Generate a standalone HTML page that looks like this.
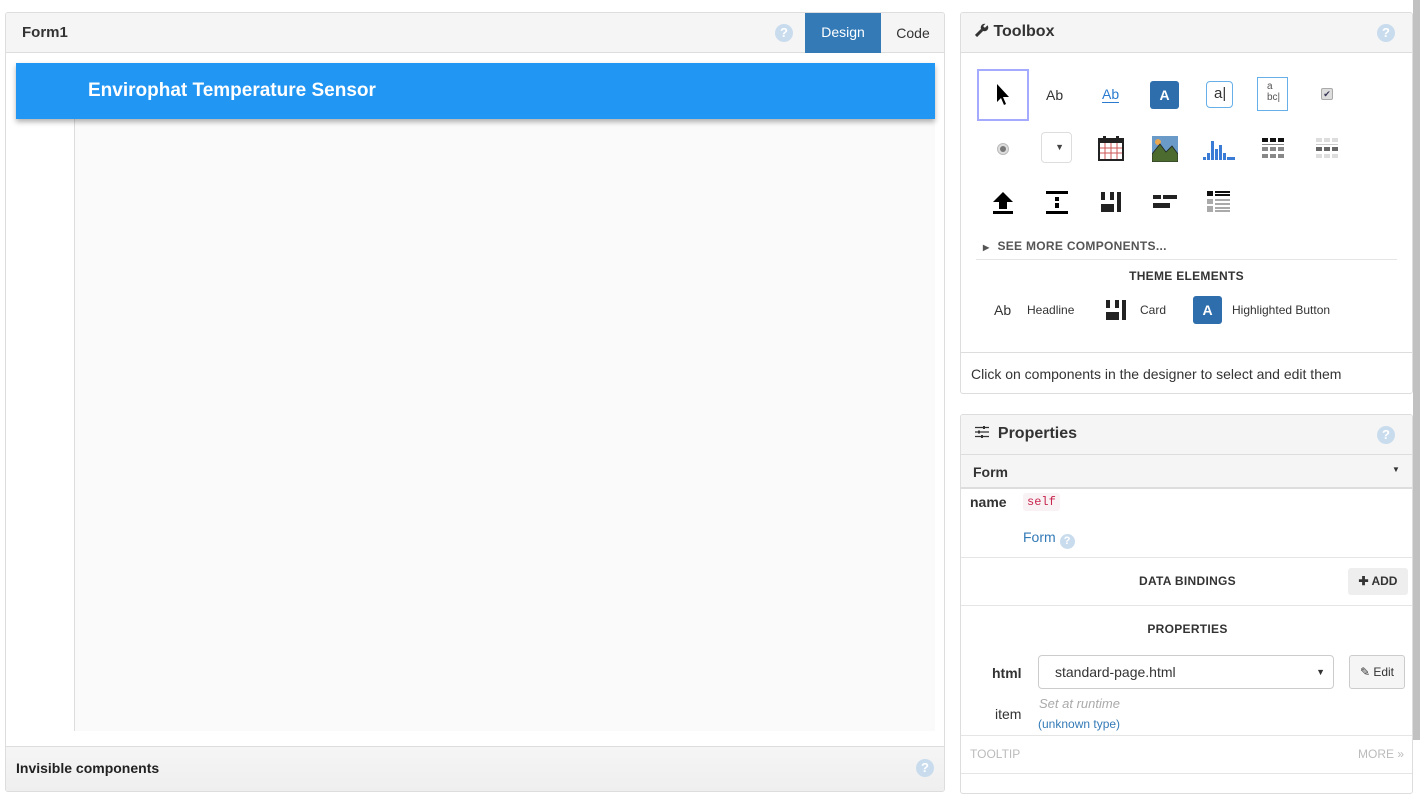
<!DOCTYPE html>
<html><head><meta charset="utf-8"><style>
*{box-sizing:border-box}
body{margin:0;width:1420px;height:780px;overflow:hidden;background:#fff;font-family:"Liberation Sans",Arial,sans-serif;color:#333;font-size:14px;position:relative}
.abs{position:absolute}
.panel{position:absolute;border:1px solid #ddd;border-radius:3px;background:#fff;overflow:hidden}
.hdr{position:absolute;left:0;right:0;top:0;height:40px;background:#f5f5f5;border-bottom:1px solid #ddd}
.q{position:absolute;width:18px;height:18px;border-radius:50%;background:#c9dcee;color:#fff;font-weight:bold;font-size:13px;text-align:center;line-height:18px}
.sep{position:absolute;left:0;right:0;height:1px;background:#e5e5e5}
.ic{position:absolute}
.cap{font-weight:bold;font-size:12px;letter-spacing:.3px;color:#333}
</style></head><body>

<!-- Form panel -->
<div class="panel" style="left:5px;top:12px;width:940px;height:780px">
 <div class="hdr"><div class="abs" style="left:16px;top:11px;font-size:15px;font-weight:bold">Form1</div>
  <div class="q" style="left:769px;top:11px">?</div>
  <div class="abs" style="left:799px;top:-1px;width:76px;height:41px;background:#337ab7;color:#fff;text-align:center;line-height:41px">Design</div>
  <div class="abs" style="left:875px;top:0;width:64px;height:40px;color:#333;text-align:center;line-height:40px">Code</div>
 </div>
 <div class="abs" style="left:68px;top:106px;width:861px;height:612px;background:#fafafa;border-left:1px solid #ddd"></div>
 <div class="abs" style="left:10px;top:50px;width:919px;height:56px;background:#2196f3;box-shadow:0 3px 5px rgba(0,0,0,.3);color:#fff;font-size:19px;font-weight:bold;padding-left:72px;line-height:56px">Envirophat Temperature Sensor</div>
 <div class="abs" style="left:0;right:0;top:733px;height:50px;background:linear-gradient(#f5f5f5,#eee);border-top:1px solid #ddd">
  <div class="abs" style="left:10px;top:13px;font-size:14px;font-weight:bold;color:#222">Invisible components</div>
  <div class="q" style="left:910px;top:12px">?</div>
 </div>
</div>

<!-- Toolbox -->
<div class="panel" style="left:960px;top:12px;width:453px;height:382px">
 <div class="hdr"><div class="abs" style="left:14px;top:10px;font-size:16px;font-weight:bold">
  <svg width="14" height="14" viewBox="0 0 14 14" style="vertical-align:-1px"><path d="M1 13 L7 7" stroke="#333" stroke-width="3"/><circle cx="9.5" cy="4.5" r="3.8" fill="#333"/><path d="M9 4 L12 1" stroke="#f5f5f5" stroke-width="2.5"/></svg> Toolbox</div>
  <div class="q" style="left:416px;top:11px">?</div>
 </div>
</div>
<div class="abs" style="left:977px;top:69px;width:52px;height:52px;border:2px solid #a4aaff"></div>
<svg class="ic" style="left:996px;top:83px" width="16" height="24" viewBox="0 0 16 24"><path d="M1 1 L1 19 L5 15 L8 22 L10 21 L7 14 L13 14 Z" fill="#000"/></svg>
<div class="abs" style="left:1046px;top:87px;font-size:14px;color:#333">Ab</div>
<div class="abs" style="left:1102px;top:87px;font-size:14px;color:#2a7bd0;border-bottom:1px solid #2a7bd0;line-height:15px">Ab</div>
<div class="abs" style="left:1150px;top:81px;width:29px;height:28px;background:#2f6ead;border-radius:3px;color:#fff;font-weight:bold;text-align:center;line-height:28px;font-size:14px">A</div>
<div class="abs" style="left:1206px;top:81px;width:27px;height:27px;border:1px solid #66afe9;border-radius:4px;font-size:15px;padding-left:7px;line-height:24px">a|</div>
<div class="abs" style="left:1257px;top:77px;width:31px;height:34px;border:1px solid #66afe9;font-size:10px;color:#555;line-height:11px;padding:3px 0 0 9px">a<br>bc|</div>
<div class="abs" style="left:1321px;top:88px;width:12px;height:12px;background:#ddd;border:1px solid #aaa;border-radius:2px;font-size:9px;color:#335;text-align:center;line-height:10px">✔</div>

<div class="abs" style="left:997px;top:143px;width:12px;height:12px;border-radius:50%;background:#ddd;border:1px solid #bbb"><div style="margin:2px;width:6px;height:6px;border-radius:50%;background:#777"></div></div>
<div class="abs" style="left:1041px;top:132px;width:31px;height:31px;border:1px solid #ddd;border-radius:4px;font-size:9px;color:#444;text-align:right;padding-right:7px;line-height:29px">▼</div>
<svg class="ic" style="left:1098px;top:135px" width="26" height="26" viewBox="0 0 26 26"><rect x="1" y="4" width="24" height="21" fill="#fff" stroke="#222" stroke-width="2"/><rect x="1" y="4" width="24" height="4" fill="#222"/><rect x="5" y="1" width="3" height="6" fill="#222"/><rect x="18" y="1" width="3" height="6" fill="#222"/><path d="M7 8v16M13 8v16M19 8v16M2 13h22M2 18h22" stroke="#c55" stroke-width="1"/></svg>
<svg class="ic" style="left:1152px;top:136px" width="26" height="26" viewBox="0 0 26 26"><rect width="26" height="26" fill="#6a9bc8"/><circle cx="6" cy="6" r="3" fill="#e9a84f"/><path d="M0 26 L0 18 L8 8 L14 16 L20 10 L26 18 L26 26Z" fill="#4b6b2f" stroke="#222" stroke-width=".8"/></svg>
<svg class="ic" style="left:1203px;top:138px" width="32" height="22" viewBox="0 0 32 22"><g fill="#3a7bd5"><rect x="0" y="19" width="3" height="3"/><rect x="4" y="15" width="3" height="7"/><rect x="8" y="3" width="3" height="19"/><rect x="12" y="11" width="3" height="11"/><rect x="16" y="7" width="3" height="15"/><rect x="20" y="15" width="3" height="7"/><rect x="24" y="19" width="8" height="3"/></g></svg>
<svg class="ic" style="left:1261px;top:137px" width="24" height="24" viewBox="0 0 24 24"><g fill="#111"><rect x="1" y="1" width="6" height="4"/><rect x="9" y="1" width="6" height="4"/><rect x="17" y="1" width="6" height="4"/></g><rect x="1" y="7" width="22" height="1" fill="#888"/><g fill="#888"><rect x="1" y="10" width="6" height="4"/><rect x="9" y="10" width="6" height="4"/><rect x="17" y="10" width="6" height="4"/><rect x="1" y="17" width="6" height="4"/><rect x="9" y="17" width="6" height="4"/><rect x="17" y="17" width="6" height="4"/></g></svg>
<svg class="ic" style="left:1315px;top:137px" width="24" height="24" viewBox="0 0 24 24"><g fill="#ddd"><rect x="1" y="1" width="6" height="4"/><rect x="9" y="1" width="6" height="4"/><rect x="17" y="1" width="6" height="4"/><rect x="1" y="17" width="6" height="4"/><rect x="9" y="17" width="6" height="4"/><rect x="17" y="17" width="6" height="4"/></g><rect x="1" y="7" width="22" height="1" fill="#ccc"/><g fill="#666"><rect x="1" y="10" width="6" height="4"/><rect x="9" y="10" width="6" height="4"/><rect x="17" y="10" width="6" height="4"/></g></svg>

<svg class="ic" style="left:992px;top:191px" width="22" height="24" viewBox="0 0 22 24"><path d="M11 1 L21 11 L15 11 L15 18 L7 18 L7 11 L1 11Z" fill="#000"/><rect x="1" y="20" width="20" height="3" fill="#000"/></svg>
<svg class="ic" style="left:1045px;top:190px" width="24" height="25" viewBox="0 0 24 25"><rect x="1" y="1" width="22" height="3" fill="#000"/><rect x="1" y="21" width="22" height="3" fill="#000"/><rect x="10" y="7" width="4" height="4" fill="#000"/><rect x="10" y="13" width="4" height="5" fill="#000"/></svg>
<svg class="ic" style="left:1100px;top:191px" width="22" height="22" viewBox="0 0 22 22"><g fill="#222"><rect x="1" y="1" width="4" height="8"/><rect x="10" y="1" width="4" height="8"/><rect x="1" y="13" width="13" height="8"/><rect x="17" y="1" width="4" height="20"/></g></svg>
<svg class="ic" style="left:1153px;top:195px" width="24" height="14" viewBox="0 0 24 14"><rect x="0" y="0" width="8" height="4" fill="#222"/><rect x="10" y="0" width="14" height="4" fill="#222"/><rect x="0" y="8" width="17" height="5" fill="#222"/></svg>
<svg class="ic" style="left:1207px;top:191px" width="24" height="22" viewBox="0 0 24 22"><rect x="0" y="0" width="6" height="5" fill="#111"/><rect x="8" y="0" width="15" height="2" fill="#111"/><rect x="8" y="3" width="15" height="2" fill="#111"/><g fill="#aaa"><rect x="0" y="8" width="6" height="5"/><rect x="0" y="15" width="6" height="6"/><rect x="8" y="8" width="15" height="2"/><rect x="8" y="12" width="15" height="2"/><rect x="8" y="16" width="15" height="2"/><rect x="8" y="19" width="15" height="2"/></g></svg>

<div class="abs cap" style="left:983px;top:239px;color:#555"><span style="font-size:8px;margin-right:8px">▶</span>SEE MORE COMPONENTS...</div>
<div class="abs" style="left:976px;top:259px;width:421px;height:1px;background:#e5e5e5"></div>
<div class="abs cap" style="left:960px;width:453px;top:269px;text-align:center">THEME ELEMENTS</div>
<div class="abs" style="left:994px;top:302px;font-size:14px">Ab</div>
<div class="abs" style="left:1027px;top:303px;font-size:12px">Headline</div>
<svg class="ic" style="left:1105px;top:299px" width="22" height="22" viewBox="0 0 22 22"><g fill="#222"><rect x="1" y="1" width="4" height="8"/><rect x="10" y="1" width="4" height="8"/><rect x="1" y="13" width="13" height="8"/><rect x="17" y="1" width="4" height="20"/></g></svg>
<div class="abs" style="left:1140px;top:303px;font-size:12px">Card</div>
<div class="abs" style="left:1193px;top:296px;width:29px;height:28px;background:#2f6ead;border-radius:3px;color:#fff;font-weight:bold;text-align:center;line-height:28px;font-size:14px">A</div>
<div class="abs" style="left:1232px;top:303px;font-size:12px">Highlighted Button</div>
<div class="abs" style="left:961px;top:352px;width:451px;height:1px;background:#ddd"></div>
<div class="abs" style="left:971px;top:366px;font-size:14px">Click on components in the designer to select and edit them</div>

<!-- Properties -->
<div class="panel" style="left:960px;top:414px;width:453px;height:380px">
 <div class="hdr"><div class="abs" style="left:14px;top:10px;font-size:16px;font-weight:bold">
  <svg width="14" height="12" viewBox="0 0 14 12" style="vertical-align:0"><path d="M0 1.5h14M0 6h14M0 10.5h14" stroke="#333" stroke-width="1.3"/><rect x="8" y="0" width="2" height="3" fill="#333"/><rect x="3" y="4.5" width="2" height="3" fill="#333"/><rect x="6" y="9" width="2" height="3" fill="#333"/></svg>&nbsp; Properties</div>
  <div class="q" style="left:416px;top:11px">?</div>
 </div>
 <div class="abs" style="left:0;right:0;top:40px;height:34px;background:#f5f5f5;border-bottom:2px solid #ddd">
  <div class="abs" style="left:12px;top:9px;font-weight:bold;font-size:14px">Form</div>
  <div class="abs" style="left:431px;top:10px;font-size:8px">▼</div>
 </div>
 <div class="abs" style="left:9px;top:79px;font-weight:bold;font-size:14px">name</div>
 <div class="abs" style="left:62px;top:78px;background:#f9f2f4;color:#c7254e;font-family:'Liberation Mono',monospace;font-size:12px;padding:2px 4px;border-radius:3px">self</div>
 <div class="abs" style="left:62px;top:114px;color:#337ab7;font-size:14px">Form <span class="q" style="position:relative;display:inline-block;width:15px;height:15px;line-height:15px;font-size:11px;vertical-align:-2px">?</span></div>
 <div class="sep" style="top:142px"></div>
 <div class="abs cap" style="left:0;width:453px;top:159px;text-align:center">DATA BINDINGS</div>
 <div class="abs" style="left:387px;top:153px;width:60px;height:27px;background:#eee;border-radius:3px;font-size:12px;font-weight:bold;text-align:center;line-height:27px">✚ ADD</div>
 <div class="sep" style="top:190px"></div>
 <div class="abs cap" style="left:0;width:453px;top:207px;text-align:center">PROPERTIES</div>
 <div class="abs" style="left:31px;top:250px;font-weight:bold;font-size:14px">html</div>
 <div class="abs" style="left:77px;top:240px;width:296px;height:34px;border:1px solid #ccc;border-radius:4px;padding-left:16px;line-height:32px;font-size:14px">standard-page.html<span style="position:absolute;right:8px;font-size:9px">▼</span></div>
 <div class="abs" style="left:388px;top:240px;width:56px;height:34px;border:1px solid #ccc;border-radius:3px;background:#f5f5f5;font-size:12px;text-align:center;line-height:32px">✎ Edit</div>
 <div class="abs" style="left:34px;top:291px;font-size:14px">item</div>
 <div class="abs" style="left:78px;top:281px;font-size:13px;font-style:italic;color:#aaa">Set at runtime</div>
 <div class="abs" style="left:77px;top:302px;font-size:12px;color:#337ab7">(unknown type)</div>
 <div class="sep" style="top:320px"></div>
 <div class="abs" style="left:9px;top:332px;font-size:12px;color:#bbb">TOOLTIP</div>
 <div class="abs" style="left:397px;top:332px;font-size:12px;color:#bbb">MORE »</div>
 <div class="sep" style="top:358px"></div>
</div>

<div class="abs" style="left:1413px;top:0;width:7px;height:740px;background:#c1c1c1"></div>
</body></html>
